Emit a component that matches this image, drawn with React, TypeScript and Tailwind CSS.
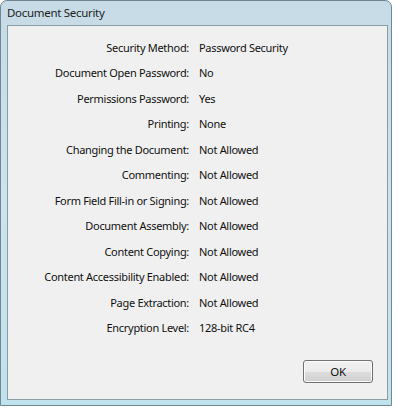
const rows: [string, string][] = [
  ["Security Method:", "Password Security"],
  ["Document Open Password:", "No"],
  ["Permissions Password:", "Yes"],
  ["Printing:", "None"],
  ["Changing the Document:", "Not Allowed"],
  ["Commenting:", "Not Allowed"],
  ["Form Field Fill-in or Signing:", "Not Allowed"],
  ["Document Assembly:", "Not Allowed"],
  ["Content Copying:", "Not Allowed"],
  ["Content Accessibility Enabled:", "Not Allowed"],
  ["Page Extraction:", "Not Allowed"],
  ["Encryption Level:", "128-bit RC4"],
];

export default function App() {
  return (
    <div className="w-[398px] h-[409px] bg-white font-['Noto_Sans','Open_Sans',sans-serif] text-[11px] tracking-[-0.3px] text-[#111]">
      <div className="w-[392px] h-[406px] flex flex-col rounded-t-[7px] border border-[#6f8795] bg-gradient-to-b from-[#c6dbe5] via-[#cfe3eb] to-[#bfe2ec] pl-[6px] pr-[3px] pb-[5px]">
        <div className="h-[24px] flex items-center pb-[1px] text-[11.5px] text-[#1e1e1e]">
          Document Security
        </div>
        <div className="flex-1 flex flex-col border border-[#8b9ca6] bg-[#f0f0f0]">
          <div className="grid grid-cols-[181px_1fr] gap-x-[10px] pt-[9px]">
            {rows.map(([label, value]) => (
              <div key={label} className="contents">
                <div className="text-right leading-[25.45px] whitespace-nowrap">{label}</div>
                <div className="leading-[25.45px] whitespace-nowrap">{value}</div>
              </div>
            ))}
          </div>
          <div className="flex-1" />
          <div className="flex justify-end pr-[14px] pb-[16px]">
            <button className="w-[70px] h-[23px] rounded-[3px] border border-[#707070] bg-[linear-gradient(to_bottom,#f2f2f2_0%,#ebebeb_50%,#dddddd_51%,#cfcfcf_100%)] text-[11.5px] text-[#111] shadow-[inset_0_0_0_1px_#fbfbfb]">
              OK
            </button>
          </div>
        </div>
      </div>
    </div>
  );
}
